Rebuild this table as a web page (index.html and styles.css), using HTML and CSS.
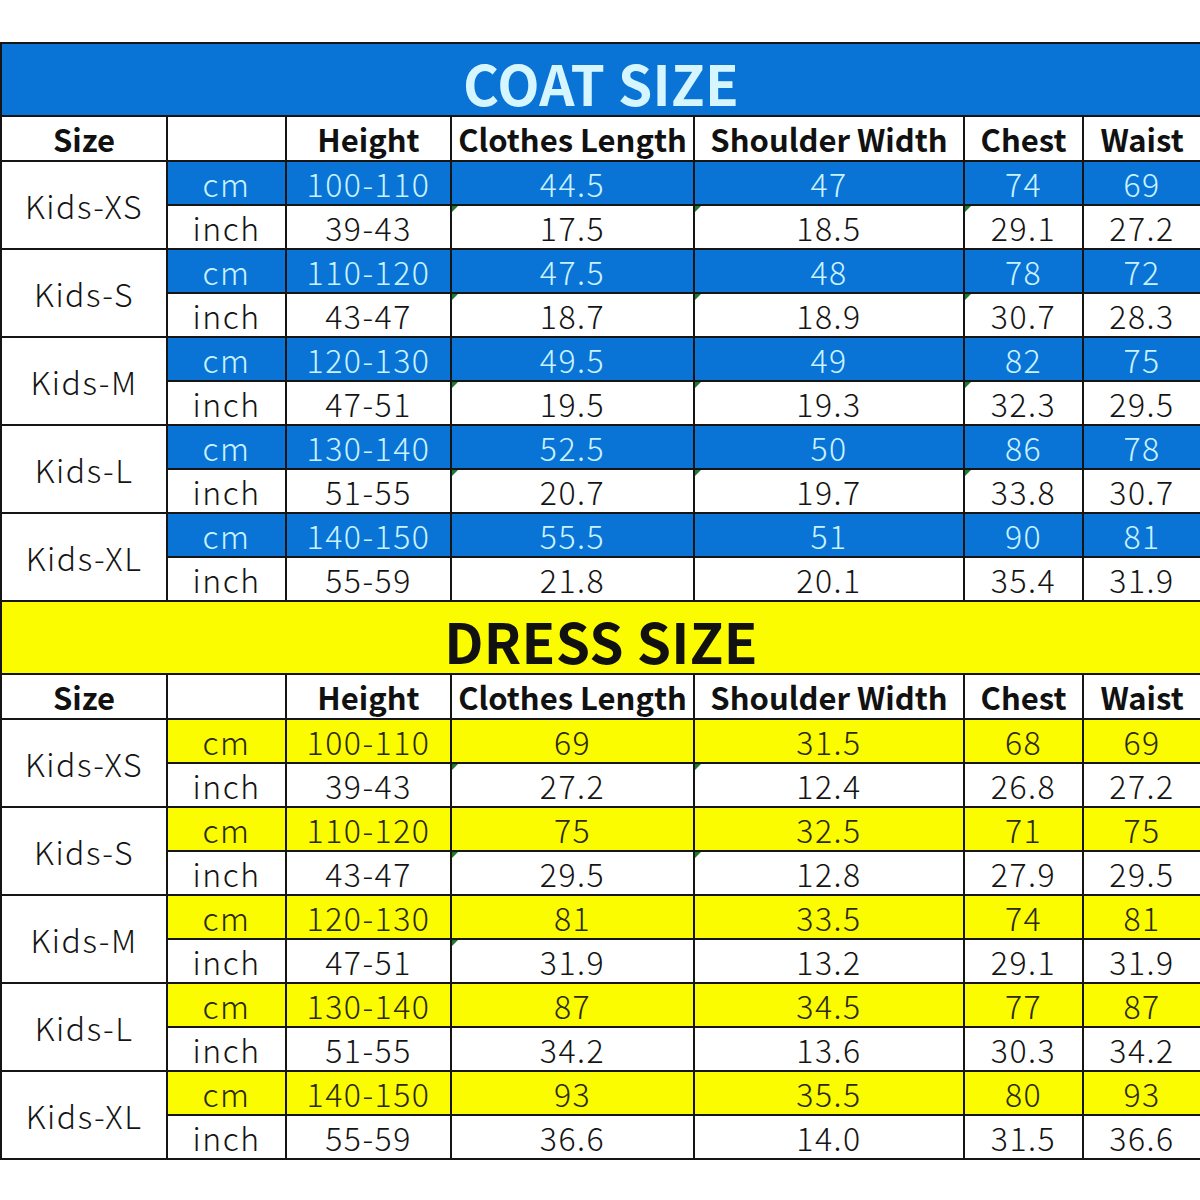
FILE: index.html
```html
<!DOCTYPE html>
<html>
<head>
<meta charset="utf-8">
<link rel="stylesheet" href="styles.css">
</head>
<body>
<table class="chart">
<colgroup>
<col class="c1"><col class="c2"><col class="c3"><col class="c4"><col class="c5"><col class="c6"><col class="c7">
</colgroup>
<tbody class="coat">
<tr class="title"><td colspan="7">COAT SIZE</td></tr>
<tr class="head"><td>Size</td><td></td><td>Height</td><td>Clothes Length</td><td>Shoulder Width</td><td>Chest</td><td>Waist</td></tr>
<tr class="cm"><td class="size" rowspan="2">Kids-XS</td><td>cm</td><td>100-110</td><td>44.5</td><td>47</td><td>74</td><td>69</td></tr>
<tr class="in"><td>inch</td><td>39-43</td><td class="mk">17.5</td><td class="mk">18.5</td><td class="mk">29.1</td><td>27.2</td></tr>
<tr class="cm"><td class="size" rowspan="2">Kids-S</td><td>cm</td><td>110-120</td><td>47.5</td><td>48</td><td>78</td><td>72</td></tr>
<tr class="in"><td>inch</td><td>43-47</td><td class="mk">18.7</td><td class="mk">18.9</td><td class="mk">30.7</td><td>28.3</td></tr>
<tr class="cm"><td class="size" rowspan="2">Kids-M</td><td>cm</td><td>120-130</td><td>49.5</td><td>49</td><td>82</td><td>75</td></tr>
<tr class="in"><td>inch</td><td>47-51</td><td class="mk">19.5</td><td class="mk">19.3</td><td class="mk">32.3</td><td>29.5</td></tr>
<tr class="cm"><td class="size" rowspan="2">Kids-L</td><td>cm</td><td>130-140</td><td>52.5</td><td>50</td><td>86</td><td>78</td></tr>
<tr class="in"><td>inch</td><td>51-55</td><td class="mk">20.7</td><td class="mk">19.7</td><td class="mk">33.8</td><td>30.7</td></tr>
<tr class="cm"><td class="size" rowspan="2">Kids-XL</td><td>cm</td><td>140-150</td><td>55.5</td><td>51</td><td>90</td><td>81</td></tr>
<tr class="in"><td>inch</td><td>55-59</td><td>21.8</td><td>20.1</td><td>35.4</td><td>31.9</td></tr>
</tbody>
<tbody class="dress">
<tr class="title"><td colspan="7">DRESS SIZE</td></tr>
<tr class="head"><td>Size</td><td></td><td>Height</td><td>Clothes Length</td><td>Shoulder Width</td><td>Chest</td><td>Waist</td></tr>
<tr class="cm"><td class="size" rowspan="2">Kids-XS</td><td>cm</td><td>100-110</td><td>69</td><td>31.5</td><td>68</td><td>69</td></tr>
<tr class="in"><td>inch</td><td>39-43</td><td class="mk">27.2</td><td class="mk">12.4</td><td>26.8</td><td>27.2</td></tr>
<tr class="cm"><td class="size" rowspan="2">Kids-S</td><td>cm</td><td>110-120</td><td>75</td><td>32.5</td><td>71</td><td>75</td></tr>
<tr class="in"><td>inch</td><td>43-47</td><td class="mk">29.5</td><td class="mk">12.8</td><td>27.9</td><td>29.5</td></tr>
<tr class="cm"><td class="size" rowspan="2">Kids-M</td><td>cm</td><td>120-130</td><td>81</td><td>33.5</td><td>74</td><td>81</td></tr>
<tr class="in"><td>inch</td><td>47-51</td><td class="mk">31.9</td><td>13.2</td><td>29.1</td><td>31.9</td></tr>
<tr class="cm"><td class="size" rowspan="2">Kids-L</td><td>cm</td><td>130-140</td><td>87</td><td>34.5</td><td>77</td><td>87</td></tr>
<tr class="in"><td>inch</td><td>51-55</td><td>34.2</td><td>13.6</td><td>30.3</td><td>34.2</td></tr>
<tr class="cm"><td class="size" rowspan="2">Kids-XL</td><td>cm</td><td>140-150</td><td>93</td><td>35.5</td><td>80</td><td>93</td></tr>
<tr class="in"><td>inch</td><td>55-59</td><td>36.6</td><td>14.0</td><td>31.5</td><td>36.6</td></tr>
</tbody>
</table>
</body>
</html>
```

FILE: styles.css
```css
html, body {
  margin: 0;
  padding: 0;
  background: #ffffff;
}
.chart {
  margin-top: 42px;
  width: 1200px;
  table-layout: fixed;
  border-collapse: collapse;
  font-family: "Noto Sans CJK SC", "Noto Sans", sans-serif;
  color: #141414;
}
.c1 { width: 166px; }
.c2 { width: 119px; }
.c3 { width: 165px; }
.c4 { width: 243px; }
.c5 { width: 270px; }
.c6 { width: 119px; }
.c7 { width: 118px; }
.chart td {
  border: 2px solid #151515;
  padding: 0;
  text-align: center;
  vertical-align: middle;
  white-space: nowrap;
  font-size: 32px;
  font-weight: 300;
  line-height: 32px;
  letter-spacing: 1.5px;
  position: relative;
}
.title td {
  height: 67px;
  padding-top: 4px;
  font-size: 55px;
  line-height: 60px;
  font-weight: 700;
  letter-spacing: 0.3px;
}
.coat .title td {
  background: #0a74d6;
  color: #d6f6ff;
}
.dress .title td {
  background: #fcfc00;
  color: #111111;
}
.head td {
  height: 43px;
  font-weight: 700;
  font-size: 31px;
  line-height: 38px;
  background: #ffffff;
  color: #111;
  letter-spacing: 0;
}
.cm td, .in td {
  height: 42px;
}
.coat .cm td {
  background: #0a74d6;
  color: #c8f3ff;
}
.dress .cm td {
  background: #fcfc00;
  color: #2a2a10;
}
.chart td.size {
  background: #ffffff;
  color: #141414;
}
.in td {
  background: #ffffff;
}
.mk::before {
  content: "";
  position: absolute;
  left: 0;
  top: 0;
  width: 0;
  height: 0;
  border-top: 6px solid #1f7a2e;
  border-right: 6px solid transparent;
}
```
